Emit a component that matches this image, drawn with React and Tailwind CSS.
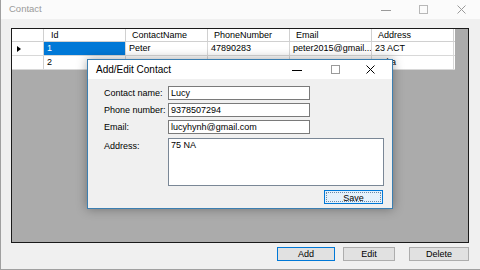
import React from "react";

const font = { fontFamily: '"Liberation Sans", Arial, sans-serif' };

const columns = ["Id", "ContactName", "PhoneNumber", "Email", "Address"];
const rows = [
  ["1", "Peter", "47890283", "peter2015@gmail...", "23 ACT"],
  ["2", "", "", "", "Delta"],
];

function MinIcon({ color }) {
  return (
    <svg width="10" height="10" viewBox="0 0 10 10">
      <path d="M0 5.5H10" stroke={color} strokeWidth="1" />
    </svg>
  );
}

function MaxIcon({ color }) {
  return (
    <svg width="9" height="9" viewBox="0 0 9 9">
      <rect x="0.5" y="0.5" width="8" height="8" fill="none" stroke={color} strokeWidth="1" />
    </svg>
  );
}

function CloseIcon({ color }) {
  return (
    <svg width="9" height="9" viewBox="0 0 9 9">
      <path d="M0.5 0.5L8.5 8.5M8.5 0.5L0.5 8.5" stroke={color} strokeWidth="1" />
    </svg>
  );
}

function Field({ label, value }) {
  return (
    <>
      <div className="text-[9px] text-black leading-[14px]">{label}</div>
      <div className="h-[14px] bg-white border border-[#7a7a7a] px-[2px] text-[9px] leading-[12px] text-black">{value}</div>
    </>
  );
}

export default function App() {
  return (
    <div className="relative w-[480px] h-[270px] overflow-hidden bg-[#f0f0f0] border-l border-b border-[#a0a0a0] flex flex-col" style={font}>
      {/* title bar (inactive) */}
      <div className="h-[19px] bg-[#fbfbfb] flex items-center pl-[8px] shrink-0">
        <div className="text-[9.5px] text-[#9a9a9a] flex-1">Contact</div>
        <div className="flex items-center">
          <div className="w-[37px] flex justify-center"><MinIcon color="#9a9a9a" /></div>
          <div className="w-[38px] flex justify-center"><MaxIcon color="#b8b8b8" /></div>
          <div className="w-[38px] flex justify-center"><CloseIcon color="#9a9a9a" /></div>
        </div>
      </div>

      {/* data grid */}
      <div className="ml-[10px] mt-[9px] w-[458px] h-[215px] bg-[#ababab] border border-[#1a1a1a] shrink-0">
        <div className="w-[443px] bg-white">
          <div className="flex h-[13px] border-b border-[#d0d0d0] text-[9px] text-black leading-[12px]">
            <div className="w-[32px] border-r border-[#d0d0d0]" />
            {columns.map((c, i) => (
              <div key={c} className={`w-[82px] border-r border-[#d0d0d0] ${i === 0 ? "pl-[7px]" : "pl-[6px]"}`}>{c}</div>
            ))}
          </div>
          {rows.map((r, ri) => (
            <div key={ri} className="flex h-[14px] border-b border-[#d8d8d8] text-[9px] text-black leading-[13px]">
              <div className="w-[32px] border-r border-[#d0d0d0] flex items-center pl-[5px]">
                {ri === 0 && (
                  <svg width="4" height="6" viewBox="0 0 4 6"><path d="M0 0L4 3L0 6Z" fill="#000" /></svg>
                )}
              </div>
              {r.map((v, ci) => (
                <div
                  key={ci}
                  className={`w-[82px] pl-[3px] border-r border-[#d8d8d8] whitespace-nowrap overflow-hidden ${ri === 0 && ci === 0 ? "bg-[#0078d7] text-white" : ""}`}
                >
                  {v}
                </div>
              ))}
            </div>
          ))}
        </div>
      </div>

      {/* bottom buttons */}
      <div className="flex justify-end mt-[4px] pr-[11px]">
        <button className="w-[58px] h-[14px] bg-[#e1e1e1] border border-[#0078d7] text-[9px] leading-[12px] text-black">Add</button>
        <button className="w-[52px] h-[14px] ml-[8px] bg-[#e1e1e1] border border-[#adadad] text-[9px] leading-[12px] text-black">Edit</button>
        <button className="w-[60px] h-[14px] ml-[14px] bg-[#e1e1e1] border border-[#adadad] text-[9px] leading-[12px] text-black">Delete</button>
      </div>

      {/* modal dialog */}
      <div className="absolute left-[86px] top-[59px] w-[306px] h-[150px] bg-[#f0f0f0] border border-[#3c7fb1] shadow-[0_0_10px_rgba(0,0,0,0.35)] flex flex-col">
        <div className="h-[19px] bg-white flex items-center pl-[8px] shrink-0">
          <div className="text-[10px] text-black flex-1">Add/Edit Contact</div>
          <div className="flex items-center">
            <div className="w-[38px] flex justify-center"><MinIcon color="#000" /></div>
            <div className="w-[38px] flex justify-center"><MaxIcon color="#9a9a9a" /></div>
            <div className="w-[38px] flex justify-center pr-[6px]"><CloseIcon color="#000" /></div>
          </div>
        </div>
        <div className="pl-[16px] pr-[8px] pt-[7px] flex flex-col">
          <div className="grid grid-cols-[64px_142px] gap-y-[3px]">
            <Field label="Contact name:" value="Lucy" />
            <Field label="Phone number:" value="9378507294" />
            <Field label="Email:" value="lucyhynh@gmail.com" />
          </div>
          <div className="flex mt-[4px]">
            <div className="w-[64px] text-[9px] text-black pt-[2px]">Address:</div>
            <div className="w-[216px] h-[48px] bg-white border border-[#7a8796] px-[2px] text-[9px] leading-[12px] text-black">75 NA</div>
          </div>
          <div className="flex justify-end mt-[4px] pr-[1px]">
            <button className="w-[59px] h-[14px] bg-[#e5f1fb] border border-[#0078d7] p-[1px] flex">
              <div className="flex-1 border border-dotted border-[#6a8aa8] text-[9px] leading-[10px] text-black text-center">Save</div>
            </button>
          </div>
        </div>
      </div>
    </div>
  );
}
